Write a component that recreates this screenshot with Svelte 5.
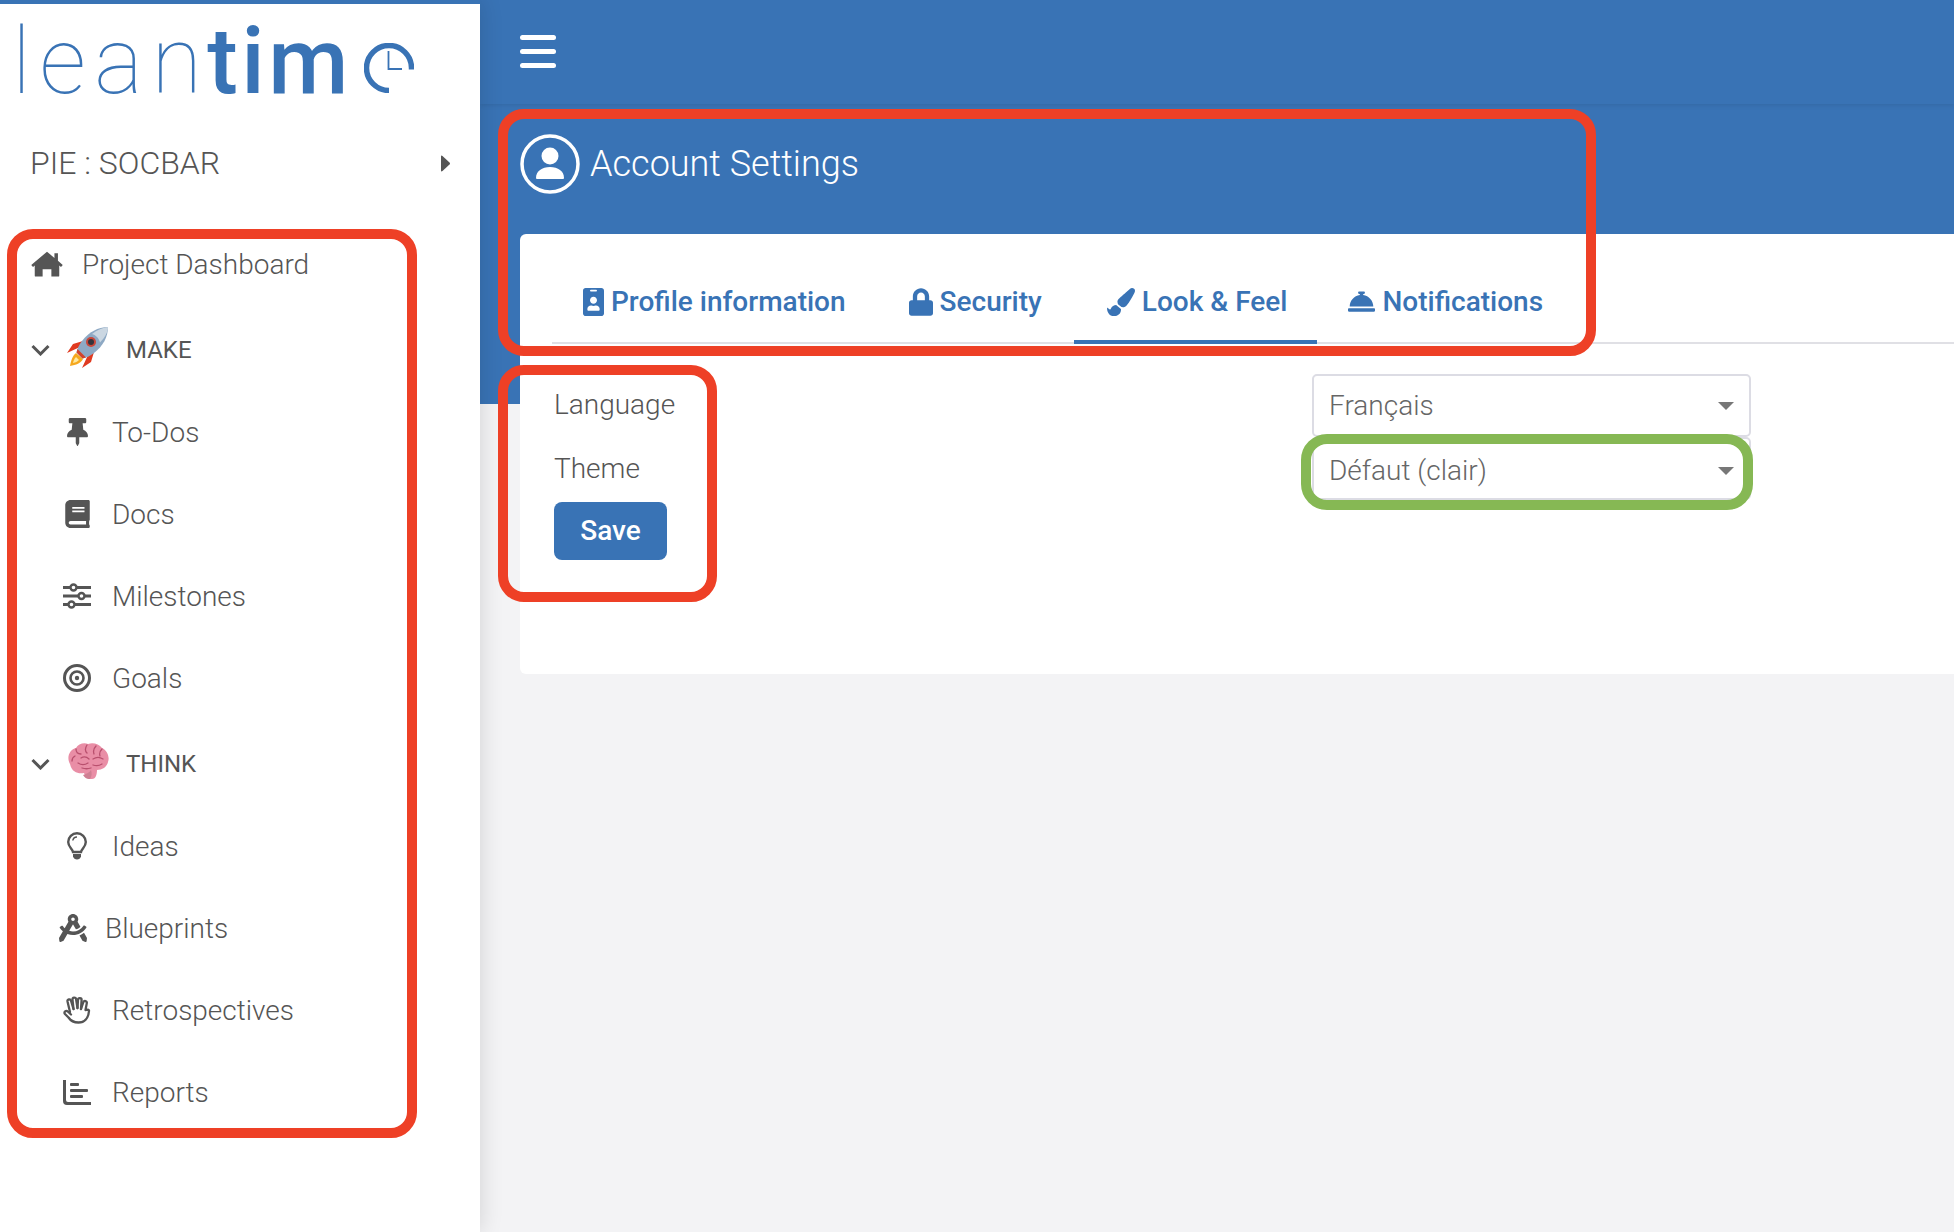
<script>
  const makeItems = [
    { label: "To-Dos", icon: "pin" },
    { label: "Docs", icon: "book" },
    { label: "Milestones", icon: "sliders" },
    { label: "Goals", icon: "target" }
  ];
  const thinkItems = [
    { label: "Ideas", icon: "bulb" },
    { label: "Blueprints", icon: "compass", shift: true },
    { label: "Retrospectives", icon: "hand" },
    { label: "Reports", icon: "chart" }
  ];
  const groups = [
    { name: "MAKE", emoji: "rocket", items: makeItems },
    { name: "THINK", emoji: "brain", items: thinkItems }
  ];
  const tabs = [
    { label: "Profile information", icon: "badge" },
    { label: "Security", icon: "lock" },
    { label: "Look & Feel", icon: "brush", active: true },
    { label: "Notifications", icon: "bell" }
  ];
</script>

{#snippet navIcon(name)}
  {#if name === "pin"}
    <svg viewBox="0 0 384 512" width="21" height="28"><path d="M298.028 214.267L285.793 96H328c13.255 0 24-10.745 24-24V24c0-13.255-10.745-24-24-24H56C42.745 0 32 10.745 32 24v48c0 13.255 10.745 24 24 24h42.207L85.972 214.267C37.465 236.82 0 277.261 0 328c0 13.255 10.745 24 24 24h136v104.007c0 1.242.289 2.467.845 3.578l24 48c2.941 5.882 11.364 5.893 14.311 0l24-48a8.008 8.008 0 0 0 .845-3.578V352h136c13.255 0 24-10.745 24-24-.001-51.183-37.983-91.42-85.973-113.733z"/></svg>
  {:else if name === "book"}
    <svg viewBox="0 0 448 512" width="25" height="28"><path d="M448 360V24c0-13.3-10.7-24-24-24H96C43 0 0 43 0 96v320c0 53 43 96 96 96h328c13.3 0 24-10.7 24-24v-16c0-7.5-3.5-14.3-8.9-18.7-4.2-15.4-4.2-59.3 0-74.7 5.4-4.3 8.9-11.1 8.9-18.6zM128 134c0-3.3 2.7-6 6-6h212c3.3 0 6 2.7 6 6v20c0 3.3-2.7 6-6 6H134c-3.3 0-6-2.7-6-6v-20zm0 64c0-3.3 2.7-6 6-6h212c3.3 0 6 2.7 6 6v20c0 3.3-2.7 6-6 6H134c-3.3 0-6-2.7-6-6v-20zm253.4 250H96c-17.7 0-32-14.3-32-32 0-17.6 14.4-32 32-32h285.4c-1.9 17.1-1.9 46.9 0 64z"/></svg>
  {:else if name === "sliders"}
    <svg viewBox="0 0 28 26" width="28" height="26" fill="none" stroke="#555" stroke-width="3">
      <path d="M0 4.500h28M0 13h28M0 21.500h28"/>
      <circle cx="10.500" cy="4.500" r="3" fill="#fff" stroke-width="2.400"/>
      <circle cx="18.500" cy="13" r="3" fill="#fff" stroke-width="2.400"/>
      <circle cx="8.500" cy="21.500" r="3" fill="#fff" stroke-width="2.400"/>
    </svg>
  {:else if name === "target"}
    <svg viewBox="0 0 28 28" width="28" height="28" fill="none" stroke="#555" stroke-width="3">
      <circle cx="14" cy="14" r="12.500"/>
      <circle cx="14" cy="14" r="6.500" stroke-width="2.600"/>
      <circle cx="14" cy="14" r="2.200" fill="#555" stroke="none"/>
    </svg>
  {:else if name === "bulb"}
    <svg viewBox="0 0 20 28" width="20" height="28" fill="none" stroke="#555" stroke-width="2.400">
      <path d="M6 20c-.4-3-4.800-5-4.800-10a8.800 8.800 0 0 1 17.600 0c0 5-4.400 7-4.800 10z"/>
      <path d="M5.800 8.500a4.200 4.200 0 0 1 4.200-3.600" stroke-width="1.500"/>
      <path d="M6 22h8v2.500q-1 3-4 3t-4-3z" fill="#555" stroke="none"/>
    </svg>
  {:else if name === "compass"}
    <svg viewBox="0 0 512 512" width="28" height="28"><path d="M457.01 344.42c-25.05 20.33-52.63 37.18-82.54 49.05l54.38 94.19 53.95 23.04c9.81 4.19 20.89-2.21 22.17-12.8l7.02-58.25-54.98-95.23zm42.49-94.56c4.86-7.67 1.89-17.99-6.05-22.39l-28.07-15.57c-7.48-4.15-16.61-1.46-21.26 5.72C403.01 281.15 332.25 320 256 320c-23.93 0-47.23-4.25-69.41-11.53l67.36-116.68c.7.02 1.34.21 2.04.21s1.35-.19 2.04-.21l51.09 88.5c31.23-8.96 59.56-25.75 82.61-48.92l-51.79-89.71C347.39 128.03 352 112.63 352 96c0-53.02-42.98-96-96-96s-96 42.98-96 96c0 16.63 4.61 32.03 12.05 45.66l-68.3 118.31c-12.55-11.61-23.96-24.59-33.68-39-4.79-7.1-13.97-9.62-21.38-5.33l-27.75 16.07c-7.85 4.54-10.63 14.9-5.64 22.47 15.57 23.64 34.69 44.21 55.98 62.02L0 439.66l7.02 58.25c1.28 10.59 12.36 16.99 22.17 12.8l53.95-23.04 70.8-122.63C186.13 377.28 220.62 384 256 384c99.05 0 190.88-51.01 243.5-134.14zM256 64c17.67 0 32 14.33 32 32s-14.33 32-32 32-32-14.33-32-32 14.33-32 32-32z"/></svg>
  {:else if name === "hand"}
    <svg viewBox="0 0 28 28" width="28" height="28" fill="none" stroke="#555" stroke-width="2.300" stroke-linecap="round" stroke-linejoin="round">
      <path d="M7 16L4.500 5.500a1.800 1.800 0 0 1 3.500-.8L10.500 13"/>
      <path d="M10.500 13L9.500 3.500a1.800 1.800 0 0 1 3.600-.3L14.500 12"/>
      <path d="M14.500 12L15 3.800a1.800 1.800 0 0 1 3.600.2L18 13"/>
      <path d="M18 13l2.400-7a1.800 1.800 0 0 1 3.400 1.100L22.500 14c1.500 0 3.800-1 3.500 1-.5 7-4.500 11.500-10.500 11.500-5 0-8-2-10-5L2 18c-1.500-2 1-4 2.800-2.500L8 18.500"/>
    </svg>
  {:else if name === "chart"}
    <svg viewBox="0 0 28 25" width="28" height="25">
      <path d="M3 0v20q0 2 2 2h23v3H4q-4 0-4-4V0z"/>
      <rect x="7" y="3" width="9" height="3" rx="1"/>
      <rect x="7" y="9" width="18" height="3" rx="1"/>
      <rect x="7" y="15" width="13" height="3" rx="1"/>
    </svg>
  {/if}
{/snippet}

{#snippet emoji(kind)}
  {#if kind === "rocket"}
    <svg class="emoji" viewBox="0 0 42 42" width="42" height="42">
      <path d="M13 21L0 27l6-9 10-3zM21 29l-6 13 9-6 3-10z" fill="#e03a20"/>
      <path d="M9 27c-3 2-5 7-6 13 6-1 11-3 13-7z" fill="#f6a81e"/>
      <path d="M9 31c-1.500 1.500-2.500 3.500-3 6 2.500-.5 4.500-1.500 6-3z" fill="#fde9a0"/>
      <path d="M41 1C31 1 22 6 15 15c-3 4-5 8-5.500 11.500l6 6c3.500-.5 7.500-2.500 11.500-5.500C36 20 41 11 41 1z" fill="#8ea9c4"/>
      <path d="M41 1C36 1.500 30 4 25 8c3.500 1 7 4 8 8.500C38 11.500 41 6 41 1z" fill="#cbd7e2"/>
      <path d="M9.500 26.500l6 6 3.500-1-8.500-8.500z" fill="#d4422a"/>
      <circle cx="24" cy="16" r="5" fill="#c9473a"/>
      <circle cx="24" cy="16" r="3" fill="#33343c"/>
    </svg>
  {:else}
    <svg class="emoji" viewBox="0 0 42 38" width="42" height="38">
      <path d="M3 22C-1 15 3 7 9 6c2-4 8-6 12-4 5-2 11 0 14 4 5 2 8 9 6 14-1 5-6 8-11 8 0 4-1 9-5 9-4 .5-7-3-8-6-5 1-12 0-14-9z" fill="#e98ea6"/>
      <path d="M24 28c1 3 1 6-1 9-3 .5-5-1-7-4 3-1 6-2 8-5z" fill="#cf7f93"/>
      <g fill="none" stroke="#b9506e" stroke-width="1.300" stroke-linecap="round">
        <path d="M9 7c0 3 2 5 5 5M20 3c-2 3-2 6 0 8M29 4c-2 2-3 5-2 8M35 7c-2 2-3 4-2 7M8 14c-2 1-3 3-3 5M14 16c3-2 6-1 8 1M26 17c3-2 7-2 10 0M11 21c3 2 7 2 10 0M26 23c3 1 6 1 9-1M15 26c3 1 6 1 9 0"/>
      </g>
    </svg>
  {/if}
{/snippet}

{#snippet tabIcon(name)}
  {#if name === "badge"}
    <svg viewBox="0 0 384 512" width="21" height="28"><path d="M336 0H48C21.500 0 0 21.500 0 48v416c0 26.500 21.500 48 48 48h288c26.500 0 48-21.500 48-48V48c0-26.500-21.500-48-48-48zM144 32h96c8.800 0 16 7.200 16 16s-7.200 16-16 16h-96c-8.800 0-16-7.200-16-16s7.200-16 16-16zm48 128c35.300 0 64 28.700 64 64s-28.700 64-64 64-64-28.700-64-64 28.700-64 64-64zm112 236.800c0 10.600-10 19.200-22.400 19.200H102.400C90 416 80 407.400 80 396.800v-19.200c0-31.800 30.100-57.600 67.200-57.600h5c12.300 5.100 25.700 8 39.800 8s27.600-2.900 39.800-8h5c37.100 0 67.200 25.800 67.200 57.600v19.200z"/></svg>
  {:else if name === "lock"}
    <svg viewBox="0 0 448 512" width="24" height="28"><path d="M400 224h-24v-72C376 68.200 307.800 0 224 0S72 68.200 72 152v72H48c-26.500 0-48 21.500-48 48v192c0 26.500 21.500 48 48 48h352c26.500 0 48-21.500 48-48V272c0-26.500-21.500-48-48-48zm-104 0H152v-72c0-39.700 32.300-72 72-72s72 32.300 72 72v72z"/></svg>
  {:else if name === "brush"}
    <svg viewBox="0 0 512 512" width="28" height="28"><path d="M167.020 309.340c-40.120 2.580-76.530 17.860-97.190 72.300-2.350 6.210-8 9.980-14.590 9.980-11.110 0-45.460-27.670-55.250-34.350C0 439.620 37.930 512 128 512c75.860 0 128-43.770 128-120.190 0-3.110-.65-6.080-.97-9.130l-88.010-73.340zM457.890 0c-15.160 0-29.370 6.710-40.210 16.450C213.270 199.050 192 203.340 192 257.090c0 13.700 3.250 26.760 8.730 38.700l63.820 53.180c7.210 1.800 14.640 3.030 22.390 3.030 62.110 0 98.110-45.470 211.160-256.460 7.380-14.350 13.900-29.850 13.900-45.990C512 20.640 486 0 457.890 0z"/></svg>
  {:else}
    <svg viewBox="0 0 512 512" width="27" height="27"><path d="M288 130.540V112h16c8.840 0 16-7.160 16-16V80c0-8.840-7.160-16-16-16h-96c-8.840 0-16 7.160-16 16v16c0 8.840 7.160 16 16 16h16v18.540C115.490 146.110 32 239.180 32 352h448c0-112.820-83.490-205.890-192-221.460zM496 384H16c-8.840 0-16 7.160-16 16v32c0 8.840 7.160 16 16 16h480c8.840 0 16-7.160 16-16v-32c0-8.840-7.160-16-16-16z"/></svg>
  {/if}
{/snippet}

<div class="page">
  <aside class="sidebar">
    <div class="logo" aria-label="leantime">
      <span class="lean">lean</span><span class="tim">tim</span>
      <svg class="logo-e" viewBox="0 0 50 50" width="50" height="50" fill="none" stroke="#3973b5">
        <path d="M47.500 26.500v-1.500a22.500 22.500 0 1 0-22.500 22.500" stroke-width="5.500"/>
        <path d="M24.500 8v18H38" stroke-width="1.800"/>
      </svg>
    </div>
    <div class="project">
      <span>PIE : SOCBAR</span>
      <svg viewBox="0 0 10 17" width="10" height="17"><path d="M1 1.500q0-1.500 1.500-.5L9.500 7.500q1 1 0 2L2.500 16q-1.500 1-1.500-.5z" fill="#555"/></svg>
    </div>

    <nav>
      <a class="dash" href="#dashboard">
        <svg viewBox="0 0 576 512" width="32" height="28" fill="#555"><path d="M288 32L0 272l32 38 32-26v186q0 16 16 16h128V350h160v136h128q16 0 16-16V284l32 26 32-38-88-74V60h-64v84z"/></svg>
        Project Dashboard
      </a>
      {#each groups as group}
        <div class="group">
          <svg class="chev" viewBox="0 0 19 12" width="19" height="12" fill="none" stroke="#555" stroke-width="3"><path d="M1.500 2l8 8 8-8"/></svg>
          {@render emoji(group.emoji)}
          <span>{group.name}</span>
        </div>
        {#each group.items as item}
          <a class="item" class:shift={item.shift} href="#item">
            <span class="ico-box">{@render navIcon(item.icon)}</span>
            {item.label}
          </a>
        {/each}
      {/each}
    </nav>
  </aside>

  <div class="main">
    <header>
      <div class="burger"><i></i><i></i><i></i></div>
    </header>

    <div class="content">
      <div class="title">
        <svg viewBox="0 0 60 60" width="60" height="60" fill="none" stroke="#fff" stroke-width="3.500">
          <circle cx="30" cy="30" r="28"/>
          <circle cx="30" cy="22" r="8.500" fill="#fff" stroke="none"/>
          <path d="M16 44c0-7 6-11 14-11s14 4 14 11q0 1-1 1H17q-1 0-1-1z" fill="#fff" stroke="none"/>
        </svg>
        <h1>Account Settings</h1>
      </div>

      <section class="card">
        <div class="tabs">
          {#each tabs as tab}
            <a class="tab" class:active={tab.active} href="#tab">
              {@render tabIcon(tab.icon)}
              {tab.label}
            </a>
          {/each}
        </div>

        <form class="form">
          <label class="first" for="lang">Language</label>
          <div class="select" id="lang"><span>Français</span><b></b></div>
          <label for="theme">Theme</label>
          <div class="select low" id="theme"><span>Défaut (clair)</span><b></b></div>
          <button type="button">Save</button>
        </form>
      </section>
    </div>
  </div>

  <div class="mark nav-mark"></div>
  <div class="mark head-mark"></div>
  <div class="mark form-mark"></div>
  <div class="mark green-mark"></div>
</div>

<style>
  :global(body) {
    margin: 0;
    background: #f3f3f5;
    font-family: Roboto, "Liberation Sans", sans-serif;
  }

  .page {
    position: relative;
    display: flex;
    min-height: 1232px;
    overflow: hidden;
    color: #555;
  }

  .sidebar {
    position: relative;
    z-index: 2;
    flex: 0 0 480px;
    box-sizing: border-box;
    border-top: 4px solid #3973b5;
    background: #fff;
    box-shadow: 0 0 22px rgba(0, 0, 0, 0.14);
  }

  .logo {
    display: flex;
    align-items: baseline;
    box-sizing: border-box;
    height: 116px;
    padding: 12px 0 0 12px;
    color: #3973b5;
    font-size: 92px;
    line-height: 92px;
  }

  .lean {
    font-weight: 100;
    letter-spacing: 8.5px;
  }

  .tim {
    font-weight: 500;
    margin-left: -3px;
    letter-spacing: 3.5px;
  }

  .logo-e {
    margin-left: 12px;
    flex: none;
  }

  .project {
    display: flex;
    align-items: center;
    justify-content: space-between;
    box-sizing: border-box;
    height: 88px;
    padding: 0 30px 2px 30px;
    font-size: 32px;
    font-weight: 300;
  }

  nav {
    margin-top: 15px;
    display: flex;
    flex-direction: column;
  }

  nav a {
    display: flex;
    align-items: center;
    color: #555;
    text-decoration: none;
    font-size: 28px;
    font-weight: 300;
    height: 82px;
  }

  .dash {
    padding-left: 31px;
    gap: 19px;
  }

  .group {
    display: flex;
    align-items: center;
    height: 82px;
    padding: 4px 0 0 31px;
    font-size: 24px;
    font-weight: 400;
  }

  .chev {
    margin-right: 17px;
  }

  .emoji {
    margin: 0 17px 6px 0;
  }

  .item {
    padding-left: 60px;
  }

  .ico-box {
    width: 34px;
    margin-right: 18px;
    display: flex;
    justify-content: center;
    fill: #555;
  }

  .item.shift {
    padding-left: 56px;
  }

  .item.shift .ico-box {
    margin-right: 15px;
  }

  .main {
    flex: 1;
    min-width: 0;
    display: flex;
    flex-direction: column;
  }

  header {
    position: relative;
    z-index: 1;
    box-sizing: border-box;
    height: 104px;
    padding: 0 0 2px 40px;
    background: #3973b5;
    box-shadow: 0 1px 5px rgba(0, 0, 0, 0.1);
    display: flex;
    align-items: center;
  }

  .burger {
    display: flex;
    flex-direction: column;
    gap: 9px;
    width: 36px;
  }

  .burger i {
    display: block;
    height: 5px;
    border-radius: 3px;
    background: #fff;
  }

  .content {
    flex: 1;
    background: linear-gradient(#3973b5 300px, #f3f3f5 300px);
    padding: 0 0 0 40px;
  }

  .title {
    display: flex;
    align-items: center;
    gap: 10px;
    height: 120px;
    margin-bottom: 10px;
    color: #fff;
  }

  h1 {
    margin: 0;
    font-size: 36px;
    font-weight: 300;
  }

  .card {
    height: 440px;
    background: #fff;
    border-radius: 6px 0 0 6px;
  }

  .tabs {
    display: flex;
    margin-left: 32px;
    padding-top: 27px;
    height: 81px;
    border-bottom: 2px solid #e0e0e5;
  }

  .tab {
    display: flex;
    align-items: center;
    gap: 7px;
    height: 81px;
    padding: 0 32px 0 31px;
    color: #3973b5;
    text-decoration: none;
    font-size: 28px;
    font-weight: 500;
    fill: currentColor;
  }

  .tab.active {
    box-shadow: inset 0 -4px 0 #3973b5;
    height: 83px;
    padding: 0 30px 2px 33px;
    box-sizing: border-box;
  }

  .form {
    display: grid;
    grid-template-columns: 758px 439px;
    grid-auto-rows: 63px;
    padding: 30px 0 0 34px;
    font-size: 28px;
    font-weight: 300;
  }

  label {
    align-self: center;
    color: #555;
  }

  label.first {
    margin-bottom: 2px;
  }

  .select {
    display: flex;
    align-items: center;
    justify-content: space-between;
    box-sizing: border-box;
    height: 63px;
    padding: 0 15px;
    border: 2px solid #dcdce4;
    border-radius: 5px;
    background: #fff;
    color: #666;
    font-size: 28px;
    font-weight: 300;
  }

  .select.low {
    padding-top: 4px;
  }

  .select b {
    width: 0;
    height: 0;
    border-left: 8px solid transparent;
    border-right: 8px solid transparent;
    border-top: 8px solid #777;
  }

  button {
    grid-column: 1;
    justify-self: start;
    align-self: start;
    margin-top: 2px;
    width: 113px;
    height: 58px;
    padding: 0 0 2px;
    border: 0;
    border-radius: 8px;
    background: #3973b5;
    color: #fff;
    font: 500 28px Roboto, "Liberation Sans", sans-serif;
  }

  .mark {
    position: absolute;
    z-index: 3;
    box-sizing: border-box;
    border: 10px solid #ee4026;
    border-radius: 26px;
    pointer-events: none;
  }

  .nav-mark {
    left: 7px;
    top: 229px;
    width: 410px;
    height: 909px;
  }

  .head-mark {
    left: 498px;
    top: 109px;
    width: 1098px;
    height: 247px;
  }

  .form-mark {
    left: 498px;
    top: 365px;
    width: 219px;
    height: 237px;
  }

  .green-mark {
    left: 1301px;
    top: 434px;
    width: 452px;
    height: 76px;
    border-color: #86b854;
  }
</style>
